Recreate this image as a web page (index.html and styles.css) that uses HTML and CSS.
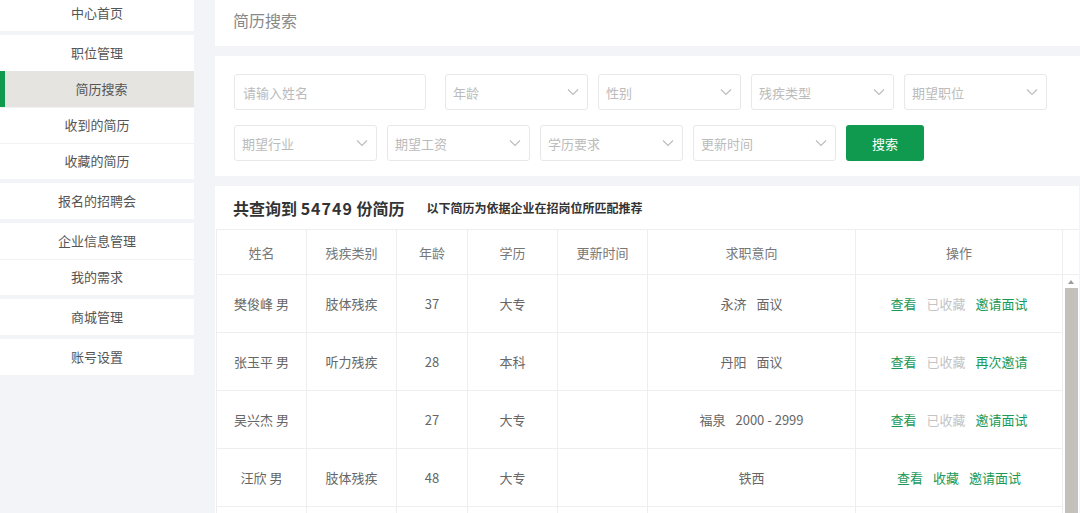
FILE: index.html
```html
<!DOCTYPE html>
<html lang="zh-CN">
<head>
    <meta charset="UTF-8">
    <meta name="viewport" content="width=device-width, initial-scale=1.0">
    <title>简历搜索</title>
    <link rel="stylesheet" href="styles.css">
</head>
<body>
    <div class="sidebar">
        <div class="menu-group first">
            <div class="menu-item">中心首页</div>
        </div>
        <div class="menu-group">
            <div class="menu-item">职位管理</div>
            <div class="menu-item active">简历搜索</div>
            <div class="menu-item">收到的简历</div>
            <div class="menu-item">收藏的简历</div>
        </div>
        <div class="menu-group">
            <div class="menu-item">报名的招聘会</div>
        </div>
        <div class="menu-group">
            <div class="menu-item">企业信息管理</div>
            <div class="menu-item">我的需求</div>
        </div>
        <div class="menu-group">
            <div class="menu-item">商城管理</div>
        </div>
        <div class="menu-group">
            <div class="menu-item">账号设置</div>
        </div>
    </div>

    <div class="main">
        <div class="card page-title">简历搜索</div>

        <div class="card filters">
            <div class="filter-row">
                <input class="name-input" type="text" placeholder="请输入姓名">
                <div class="select"><span>年龄</span><svg viewBox="0 0 12 8"><path d="M1 1.5l5 5 5-5"/></svg></div>
                <div class="select"><span>性别</span><svg viewBox="0 0 12 8"><path d="M1 1.5l5 5 5-5"/></svg></div>
                <div class="select"><span>残疾类型</span><svg viewBox="0 0 12 8"><path d="M1 1.5l5 5 5-5"/></svg></div>
                <div class="select"><span>期望职位</span><svg viewBox="0 0 12 8"><path d="M1 1.5l5 5 5-5"/></svg></div>
            </div>
            <div class="filter-row">
                <div class="select"><span>期望行业</span><svg viewBox="0 0 12 8"><path d="M1 1.5l5 5 5-5"/></svg></div>
                <div class="select"><span>期望工资</span><svg viewBox="0 0 12 8"><path d="M1 1.5l5 5 5-5"/></svg></div>
                <div class="select"><span>学历要求</span><svg viewBox="0 0 12 8"><path d="M1 1.5l5 5 5-5"/></svg></div>
                <div class="select"><span>更新时间</span><svg viewBox="0 0 12 8"><path d="M1 1.5l5 5 5-5"/></svg></div>
                <button class="search-btn">搜索</button>
            </div>
        </div>

        <div class="card results">
            <div class="results-head">
                <h2>共查询到 <span class="count">54749</span> 份简历</h2>
                <span class="hint">以下简历为依据企业在招岗位所匹配推荐</span>
            </div>
            <table class="resume-table">
                <colgroup>
                    <col style="width: 90px">
                    <col style="width: 90px">
                    <col style="width: 71px">
                    <col style="width: 90px">
                    <col style="width: 90px">
                    <col style="width: 208px">
                    <col style="width: 207px">
                    <col style="width: 16px">
                </colgroup>
                <thead>
                    <tr>
                        <th>姓名</th>
                        <th>残疾类别</th>
                        <th>年龄</th>
                        <th>学历</th>
                        <th>更新时间</th>
                        <th>求职意向</th>
                        <th>操作</th>
                        <th class="gutter"></th>
                    </tr>
                </thead>
                <tbody>
                    <tr>
                        <td>樊俊峰 男</td>
                        <td>肢体残疾</td>
                        <td>37</td>
                        <td>大专</td>
                        <td></td>
                        <td><span class="wish">永济</span><span class="wish">面议</span></td>
                        <td class="actions"><a>查看</a><a class="done">已收藏</a><a>邀请面试</a></td>
                        <td class="gutter" rowspan="5">
                            <div class="scrollbar">
                                <div class="arrow"></div>
                                <div class="thumb"></div>
                            </div>
                        </td>
                    </tr>
                    <tr>
                        <td>张玉平 男</td>
                        <td>听力残疾</td>
                        <td>28</td>
                        <td>本科</td>
                        <td></td>
                        <td><span class="wish">丹阳</span><span class="wish">面议</span></td>
                        <td class="actions"><a>查看</a><a class="done">已收藏</a><a>再次邀请</a></td>
                    </tr>
                    <tr>
                        <td>吴兴杰 男</td>
                        <td></td>
                        <td>27</td>
                        <td>大专</td>
                        <td></td>
                        <td><span class="wish">福泉</span><span class="wish">2000 - 2999</span></td>
                        <td class="actions"><a>查看</a><a class="done">已收藏</a><a>邀请面试</a></td>
                    </tr>
                    <tr>
                        <td>汪欣 男</td>
                        <td>肢体残疾</td>
                        <td>48</td>
                        <td>大专</td>
                        <td></td>
                        <td><span class="wish">铁西</span></td>
                        <td class="actions"><a>查看</a><a>收藏</a><a>邀请面试</a></td>
                    </tr>
                    <tr>
                        <td></td>
                        <td></td>
                        <td></td>
                        <td></td>
                        <td></td>
                        <td></td>
                        <td></td>
                    </tr>
                </tbody>
            </table>
        </div>
    </div>
</body>
</html>
```

FILE: styles.css
```css
* {
    margin: 0;
    padding: 0;
    box-sizing: border-box;
}

body {
    height: 513px;
    display: flex;
    align-items: flex-start;
    font-family: "Noto Sans CJK SC", "Noto Sans", sans-serif;
    background-color: #f2f4f7;
    color: #666;
    overflow: hidden;
}

/* боковое меню */
.sidebar {
    width: 194px;
    flex-shrink: 0;
    display: flex;
    flex-direction: column;
    gap: 4px;
}

.menu-group {
    background-color: #fff;
}

.menu-group.first {
    margin-top: -5px;
}

.menu-item {
    height: 36px;
    line-height: 36px;
    text-align: center;
    font-size: 13px;
    color: #555;
}

.menu-item + .menu-item {
    box-shadow: inset 0 1px #f2f2f2;
}

.menu-item.active {
    background-color: #e5e4e0;
    border-left: 5px solid #0f9a4e;
    padding-left: 4px;
    box-shadow: none;
}

/* основная часть */
.main {
    flex: 1;
    margin-left: 21px;
    display: flex;
    flex-direction: column;
    gap: 10px;
}

.card {
    background-color: #fff;
}

.page-title {
    height: 46px;
    padding: 0 18px;
    line-height: 41px;
    font-size: 16px;
    color: #888;
}

.filters {
    padding: 18px 19px 15px;
    display: flex;
    flex-direction: column;
    gap: 15px;
}

.filter-row {
    display: flex;
    gap: 10px;
}

.name-input {
    width: 192px;
    height: 36px;
    margin-right: 9px;
    padding: 0 8px;
    border: 1px solid #e8e8e8;
    border-radius: 3px;
    font-family: inherit;
    font-size: 13px;
    outline: none;
}

.name-input::placeholder {
    color: #bbb;
}

.select {
    width: 143px;
    height: 36px;
    padding: 0 8px 0 7px;
    border: 1px solid #e8e8e8;
    border-radius: 3px;
    display: flex;
    align-items: center;
    justify-content: space-between;
    font-size: 13px;
    color: #bbb;
}

.select svg {
    width: 12px;
    height: 8px;
    fill: none;
    stroke: #bbb;
    stroke-width: 1.1;
}

.search-btn {
    width: 78px;
    height: 36px;
    border: none;
    border-radius: 3px;
    background-color: #0f9a4f;
    color: #fff;
    font-family: inherit;
    font-size: 13px;
}

/* таблица резюме */
.results {
    margin-right: 2px;
    padding: 0 0 0 1px;
}

.results-head {
    height: 43px;
    padding-left: 17px;
    display: flex;
    align-items: center;
    gap: 22px;
    color: #333;
}

.results-head h2 {
    font-size: 16px;
    font-weight: bold;
}

.results-head .count {
    letter-spacing: 1px;
}

.results-head .hint {
    font-size: 12px;
    font-weight: bold;
}

.resume-table {
    width: 862px;
    border-collapse: collapse;
    table-layout: fixed;
    font-size: 13px;
    text-align: center;
}

.resume-table th,
.resume-table td {
    border: 1px solid #eeeeee;
}

.resume-table th {
    height: 45px;
    font-weight: normal;
    color: #777;
}

.resume-table td {
    height: 58px;
    color: #666;
}

.resume-table .gutter {
    border-right: none;
    vertical-align: top;
    padding: 0;
}

.wish + .wish {
    margin-left: 10px;
}

.actions a {
    color: #1a9a58;
}

.actions a + a {
    margin-left: 10px;
}

.actions a.done {
    color: #c4c4c4;
}

.scrollbar {
    height: 250px;
    padding: 5px 1px 0 2px;
    display: flex;
    flex-direction: column;
    align-items: center;
    gap: 4px;
}

.scrollbar .arrow {
    width: 0;
    height: 0;
    border-left: 3px solid transparent;
    border-right: 3px solid transparent;
    border-bottom: 4px solid #9c9c9c;
}

.scrollbar .thumb {
    width: 13px;
    flex: 1;
    background-color: #c4c0bb;
}
```
